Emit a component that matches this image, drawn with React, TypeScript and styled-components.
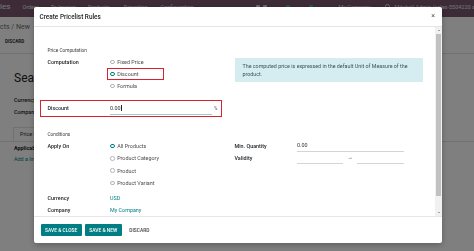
import React from "react";
import styled, { createGlobalStyle } from "styled-components";

const Global = createGlobalStyle`
  html, body { margin: 0; padding: 0; width: 474px; height: 251px; overflow: hidden; background: #fff; }
  body { font-family: Roboto, "Noto Sans", "Liberation Sans", sans-serif; }
  * { box-sizing: border-box; }
`;

const TEAL = "#017e84";

/* ---------- page behind the dialog ---------- */
const Page = styled.div`
  width: 474px;
  height: 251px;
  display: flex;
  flex-direction: column;
  background: #f7f8f8;
  overflow: hidden;
`;

const Navbar = styled.header`
  height: 17px;
  flex: none;
  padding-bottom: 4px;
  background: #7a566f;
  display: flex;
  align-items: center;
  color: #fff;
  white-space: nowrap;
`;

const Brand = styled.span`
  font-size: 8px;
  margin-left: -9px;
  color: #f0f0f0;
`;

const NavItem = styled.span<{ $ml: number }>`
  font-size: 5.5px;
  margin-left: ${(p) => p.$ml}px;
  color: #e6e6e6;
`;

const NavIcon = styled.span<{ $ml: number; $teal?: boolean }>`
  width: 4px;
  height: 4px;
  margin-left: ${(p) => p.$ml}px;
  border-radius: 1px;
  background: ${(p) => (p.$teal ? "#2bb3b8" : "#d8d8d8")};
  flex: none;
`;

const Avatar = styled.span`
  width: 5px;
  height: 5px;
  border-radius: 50%;
  border: 0.8px solid #ddd;
  margin-left: 14px;
  flex: none;
`;

const ControlPanel = styled.div`
  height: 37px;
  flex: none;
  background: #fff;
  border-bottom: 1px solid #e3e3e3;
  display: flex;
  flex-direction: column;
  padding-top: 5px;
`;

const Breadcrumb = styled.div`
  font-size: 7px;
  line-height: 10px;
  color: #6b6b6b;
  margin-left: -18.5px;
  white-space: nowrap;
`;

const CPButton = styled.div`
  margin-top: 5px;
  margin-left: 5px;
  font-size: 4.6px;
  line-height: 10px;
  font-weight: 700;
  color: #333;
`;

const Sheet = styled.div`
  flex: 1;
  background: #fff;
  padding: 17px 0 0 14px;
  display: flex;
  flex-direction: column;
`;

const SheetTitle = styled.div`
  font-size: 12px;
  line-height: 14px;
  color: #222;
  white-space: nowrap;
`;

const SheetField = styled.div<{ $mt: number }>`
  margin-top: ${(p) => p.$mt}px;
  font-size: 5.4px;
  line-height: 8px;
  font-weight: 500;
  color: #222;
`;

const Tabs = styled.div`
  margin-top: 11px;
  margin-left: -14px;
  padding-left: 13px;
  border-bottom: 1px solid #dee2e6;
  display: flex;
`;

const Tab = styled.div`
  height: 14px;
  padding: 0 6px;
  border: 1px solid #dee2e6;
  border-bottom: none;
  font-size: 5.4px;
  line-height: 13px;
  color: #333;
  white-space: nowrap;
`;

const TableHead = styled.div`
  margin-top: 2px;
  font-size: 5.4px;
  line-height: 8px;
  font-weight: 700;
  color: #222;
`;

const AddLine = styled.div`
  margin-top: 3px;
  font-size: 5.4px;
  line-height: 8px;
  color: ${TEAL};
`;

/* ---------- dialog ---------- */
const Backdrop = styled.div`
  position: fixed;
  inset: 0;
  background: rgba(0, 0, 0, 0.5);
`;

const Dialog = styled.div`
  position: fixed;
  left: 34px;
  top: 7px;
  width: 408px;
  height: 236px;
  background: #fff;
  border-radius: 2px;
  box-shadow: 0 2px 6px rgba(0, 0, 0, 0.25);
  display: flex;
  flex-direction: column;
  overflow: hidden;
`;

const DialogHeader = styled.div`
  height: 20px;
  flex: none;
  border-bottom: 1px solid #e4e4e4;
  display: flex;
  align-items: center;
  justify-content: space-between;
  padding: 0 7px 0 5.5px;
`;

const DialogTitle = styled.div`
  font-size: 6.4px;
  font-weight: 500;
  color: #212529;
`;

const CloseButton = styled.span`
  font-size: 7px;
  line-height: 7px;
  color: #555;
`;

const DialogBody = styled.div`
  flex: 1;
  display: flex;
  min-height: 0;
`;

const BodyContent = styled.div`
  flex: 1;
  overflow: hidden;
  padding: 20px 0 0 13.5px;
`;

const Scrollbar = styled.div`
  width: 7px;
  flex: none;
  background: #f1f1f1;
  display: flex;
  flex-direction: column;
  align-items: center;
`;

const ScrollArrow = styled.div<{ $down?: boolean }>`
  height: 7px;
  width: 7px;
  display: flex;
  align-items: center;
  justify-content: center;
  &::before {
    content: "";
    border-left: 1.6px solid transparent;
    border-right: 1.6px solid transparent;
    ${(p) => (p.$down ? "border-top" : "border-bottom")}: 1.8px solid #555;
  }
`;

const ScrollThumb = styled.div`
  width: 5px;
  height: 162px;
  background: #c1c1c1;
`;

const ScrollRest = styled.div`
  flex: 1;
`;

const SectionTitle = styled.div<{ $mt?: number }>`
  margin-top: ${(p) => p.$mt ?? 0}px;
  font-size: 4.75px;
  line-height: 8px;
  color: #3a3a3a;
`;

const Columns = styled.div`
  margin-top: 1px;
  display: grid;
  grid-template-columns: 178px 188px;
  column-gap: 9px;
  align-items: start;
`;

const Column = styled.div`
  display: flex;
  flex-direction: column;
`;

const FieldRow = styled.div<{ $mt?: number }>`
  margin-top: ${(p) => p.$mt ?? 0}px;
  display: flex;
  align-items: flex-start;
  position: relative;
`;

const Mark = styled.div<{ $t: number; $r: number; $b: number; $l: number }>`
  position: absolute;
  top: ${(p) => p.$t}px;
  right: ${(p) => p.$r}px;
  bottom: ${(p) => p.$b}px;
  left: ${(p) => p.$l}px;
  border: 1.5px solid #d9222d;
  pointer-events: none;
`;

const FieldLabel = styled.div<{ $h: number }>`
  width: 62.5px;
  flex: none;
  height: ${(p) => p.$h}px;
  line-height: ${(p) => p.$h}px;
  font-size: 5.4px;
  font-weight: 500;
  color: #212529;
  white-space: nowrap;
`;

const RadioList = styled.div`
  display: flex;
  flex-direction: column;
`;

const RadioItem = styled.div<{ $h: number }>`
  height: ${(p) => p.$h}px;
  display: flex;
  align-items: center;
  gap: 2.6px;
  font-size: 5.4px;
  color: #4a4a4a;
  position: relative;
  white-space: nowrap;
`;

const RadioDot = styled.span<{ $on?: boolean }>`
  width: 4.6px;
  height: 4.6px;
  border-radius: 50%;
  flex: none;
  background: #fff;
  border: ${(p) => (p.$on ? `1.4px solid ${TEAL}` : "0.6px solid #b5b5b5")};
`;

const LineInput = styled.div<{ $w: number; $h: number; $focus?: boolean }>`
  width: ${(p) => p.$w}px;
  height: ${(p) => p.$h}px;
  flex: none;
  display: flex;
  align-items: center;
  font-size: 5.4px;
  color: #333;
  border-bottom: 0.7px solid ${(p) => (p.$focus ? "#a9c6c9" : "#d4d4d4")};
`;

const Caret = styled.span`
  width: 0.6px;
  height: 5.5px;
  background: #222;
  margin-left: 0.4px;
`;

const Unit = styled.span`
  font-size: 4.6px;
  line-height: 13px;
  color: #555;
  margin-left: 2px;
`;

const Arrow = styled.span`
  width: 14px;
  text-align: center;
  font-size: 5.4px;
  color: #333;
  line-height: 10px;
`;

const LinkValue = styled.div<{ $h: number }>`
  height: ${(p) => p.$h}px;
  line-height: ${(p) => p.$h}px;
  font-size: 5.4px;
  color: ${TEAL};
`;

const Alert = styled.div`
  margin-top: 2px;
  height: 24px;
  background: #d5edf1;
  padding: 4px 8px;
  font-size: 5.35px;
  line-height: 8px;
  color: #39525a;
  white-space: nowrap;
`;

const DialogFooter = styled.div`
  height: 27px;
  flex: none;
  border-top: 1px solid #e6e6e6;
  display: flex;
  align-items: center;
  gap: 3px;
  padding: 0 6.5px;
`;

const Button = styled.button<{ $primary?: boolean }>`
  height: 12px;
  padding: 0 4.5px;
  border: none;
  border-radius: 1px;
  font-family: inherit;
  font-size: 4.9px;
  font-weight: 500;
  background: ${(p) => (p.$primary ? TEAL : "transparent")};
  color: ${(p) => (p.$primary ? "#fff" : "#444")};
  white-space: nowrap;
`;

function Radio({ label, on, h, mark }: { label: string; on?: boolean; h: number; mark?: boolean }) {
  return (
    <RadioItem $h={h}>
      <RadioDot $on={on} />
      {label}
      {mark && <Mark $t={0} $r={-20.5} $b={0.5} $l={-3} />}
    </RadioItem>
  );
}

export default function App() {
  return (
    <>
      <Global />
      <Page>
        <Navbar>
          <Brand>Sales</Brand>
          <NavItem $ml={12}>Orders</NavItem>
          <NavItem $ml={12}>To Invoice</NavItem>
          <NavItem $ml={12}>Products</NavItem>
          <NavItem $ml={14}>Reporting</NavItem>
          <NavItem $ml={13}>Configuration</NavItem>
          <NavIcon $ml={62} />
          <NavIcon $ml={3} />
          <NavIcon $ml={19} $teal />
          <NavIcon $ml={19} $teal />
          <NavItem $ml={26}>My Company</NavItem>
          <Avatar />
          <NavItem $ml={5}>Mitchell Admin (sales-5504220 sas)</NavItem>
        </Navbar>
        <ControlPanel>
          <Breadcrumb>Products / New</Breadcrumb>
          <CPButton>DISCARD</CPButton>
        </ControlPanel>
        <Sheet>
          <SheetTitle>Seasonal Discount</SheetTitle>
          <SheetField $mt={11}>Currency</SheetField>
          <SheetField $mt={4}>Company</SheetField>
          <Tabs>
            <Tab>Price Rules</Tab>
          </Tabs>
          <TableHead>Applicable On</TableHead>
          <AddLine>Add a line</AddLine>
        </Sheet>
      </Page>
      <Backdrop />
      <Dialog>
        <DialogHeader>
          <DialogTitle>Create Pricelist Rules</DialogTitle>
          <CloseButton>×</CloseButton>
        </DialogHeader>
        <DialogBody>
          <BodyContent>
            <SectionTitle>Price Computation</SectionTitle>
            <Columns>
              <Column>
                <FieldRow>
                  <FieldLabel $h={12}>Computation</FieldLabel>
                  <RadioList>
                    <Radio h={12} label="Fixed Price" />
                    <Radio h={12} label="Discount" on mark />
                    <Radio h={12} label="Formula" />
                  </RadioList>
                </FieldRow>
                <FieldRow $mt={10}>
                  <FieldLabel $h={13}>Discount</FieldLabel>
                  <LineInput $w={102} $h={13} $focus>
                    0.00
                    <Caret />
                  </LineInput>
                  <Unit>%</Unit>
                  <Mark $t={-2} $r={3.5} $b={-2} $l={-7.5} />
                </FieldRow>
              </Column>
              <Column>
                <Alert>
                  The computed price is expressed in the default Unit of Measure of the
                  <br />
                  product.
                </Alert>
              </Column>
            </Columns>
            <SectionTitle $mt={16}>Conditions</SectionTitle>
            <Columns>
              <Column>
                <FieldRow>
                  <FieldLabel $h={12.3}>Apply On</FieldLabel>
                  <RadioList>
                    <Radio h={12.3} label="All Products" on />
                    <Radio h={12.3} label="Product Category" />
                    <Radio h={12.3} label="Product" />
                    <Radio h={12.3} label="Product Variant" />
                  </RadioList>
                </FieldRow>
                <FieldRow $mt={4}>
                  <FieldLabel $h={11}>Currency</FieldLabel>
                  <LinkValue $h={11}>USD</LinkValue>
                </FieldRow>
                <FieldRow $mt={0.5}>
                  <FieldLabel $h={11}>Company</FieldLabel>
                  <LinkValue $h={11}>My Company</LinkValue>
                </FieldRow>
              </Column>
              <Column>
                <FieldRow>
                  <FieldLabel $h={12.3}>Min. Quantity</FieldLabel>
                  <LineInput $w={107} $h={11.5}>0.00</LineInput>
                </FieldRow>
                <FieldRow>
                  <FieldLabel $h={12.3}>Validity</FieldLabel>
                  <LineInput $w={46} $h={11.5} />
                  <Arrow>→</Arrow>
                  <LineInput $w={47} $h={11.5} />
                </FieldRow>
              </Column>
            </Columns>
          </BodyContent>
          <Scrollbar>
            <ScrollArrow />
            <ScrollThumb />
            <ScrollRest />
            <ScrollArrow $down />
          </Scrollbar>
        </DialogBody>
        <DialogFooter>
          <Button $primary>SAVE &amp; CLOSE</Button>
          <Button $primary>SAVE &amp; NEW</Button>
          <Button>DISCARD</Button>
        </DialogFooter>
      </Dialog>
    </>
  );
}
